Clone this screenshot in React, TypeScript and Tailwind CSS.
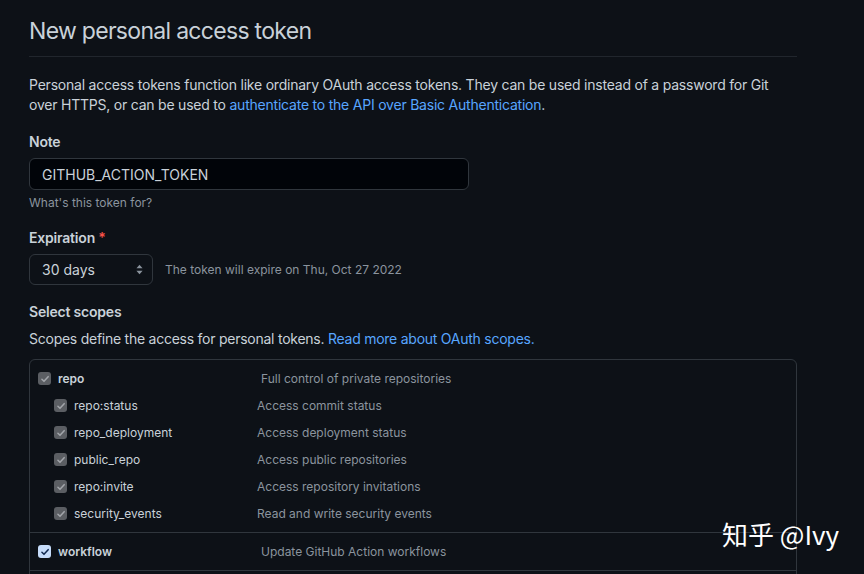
const SUB_SCOPES = [
  { name: "repo:status", desc: "Access commit status" },
  { name: "repo_deployment", desc: "Access deployment status" },
  { name: "public_repo", desc: "Access public repositories" },
  { name: "repo:invite", desc: "Access repository invitations" },
  { name: "security_events", desc: "Read and write security events" },
];

function Check({ active = false }: { active?: boolean }) {
  return (
    <span
      className={
        "flex h-[13px] w-[13px] shrink-0 items-center justify-center rounded-[3px] " +
        (active ? "bg-[#c6dcfa]" : "bg-[#5b5e63]")
      }
    >
      <svg viewBox="0 0 12 12" className="h-[10px] w-[10px]" fill="none">
        <path
          d="M2.3 6.3 L4.8 8.8 L9.8 3.2"
          stroke={active ? "#10284f" : "#a3a6ab"}
          strokeWidth="1.8"
          strokeLinecap="round"
          strokeLinejoin="round"
        />
      </svg>
    </span>
  );
}

function SelectArrows() {
  return (
    <svg viewBox="0 0 8 12" className="h-[11px] w-[7px]" fill="#8b949e">
      <path d="M4 0.5 L7.5 4.5 H0.5 Z" />
      <path d="M4 11.5 L7.5 7.5 H0.5 Z" />
    </svg>
  );
}

export default function App() {
  return (
    <div
      className="relative min-h-[574px] w-full overflow-hidden bg-[#0d1117] text-[#c9d1d9]"
      style={{ fontFamily: "Inter, 'Noto Sans', 'Liberation Sans', sans-serif" }}
    >
      <div className="ml-[29px] w-[768px]">
        {/* Header */}
        <div className="border-b border-[#21262d] pt-[16px] pb-[10px]">
          <h1 className="text-[23px] leading-[30px] font-normal tracking-[-0.7px]">
            New personal access token
          </h1>
        </div>

        <p className="mt-[18px] text-[14px] leading-[20px] tracking-[-0.22px]">
          Personal access tokens function like ordinary OAuth access tokens. They can be used instead of a password for Git
          <br />
          over HTTPS, or can be used to{" "}
          <span className="text-[#58a6ff]">authenticate to the API over Basic Authentication</span>.
        </p>

        {/* Note */}
        <div className="mt-[17px] text-[14px] leading-[20px] font-semibold tracking-[-0.2px]">Note</div>
        <div className="mt-[6px] flex h-[32px] w-[440px] items-center rounded-[6px] border border-[#30363d] bg-[#010409] px-[12px] text-[14px]">
          GITHUB_ACTION_TOKEN
        </div>
        <div className="mt-[4px] text-[12px] leading-[18px] text-[#8b949e]">What's this token for?</div>

        {/* Expiration */}
        <div className="mt-[16px] text-[14px] leading-[20px] font-semibold tracking-[-0.2px]">
          Expiration <span className="text-[#f85149]">*</span>
        </div>
        <div className="mt-[6px] flex items-center gap-[12px]">
          <div className="flex h-[31px] w-[124px] items-center justify-between rounded-[6px] border border-[#30363d] bg-[#0d1117] pr-[9px] pl-[12px] text-[14px]">
            <span>30 days</span>
            <SelectArrows />
          </div>
          <span className="text-[12px] text-[#8b949e]">The token will expire on Thu, Oct 27 2022</span>
        </div>

        {/* Scopes */}
        <div className="mt-[17px] text-[14px] leading-[20px] font-semibold tracking-[-0.2px]">Select scopes</div>
        <p className="mt-[7px] text-[14px] leading-[20px] tracking-[-0.25px]">
          Scopes define the access for personal tokens.{" "}
          <span className="text-[#58a6ff]">Read more about OAuth scopes.</span>
        </p>

        <div className="mt-[10px] rounded-[6px] border border-[#30363d]">
          <div className="border-b border-[#30363d] py-[5px]">
            <div className="flex h-[27px] items-center pl-[8px]">
              <Check />
              <span className="ml-[7px] w-[203px] text-[12px] font-semibold">repo</span>
              <span className="text-[12px] text-[#8b949e]">Full control of private repositories</span>
            </div>
            {SUB_SCOPES.map((s) => (
              <div key={s.name} className="flex h-[27px] items-center pl-[24px]">
                <Check />
                <span className="ml-[7px] w-[183px] text-[12px]">{s.name}</span>
                <span className="text-[12px] text-[#8b949e]">{s.desc}</span>
              </div>
            ))}
          </div>
          <div className="border-b border-[#30363d] py-[5px]">
            <div className="flex h-[27px] items-center pl-[8px]">
              <Check active />
              <span className="ml-[7px] w-[203px] text-[12px] font-semibold">workflow</span>
              <span className="text-[12px] text-[#8b949e]">Update GitHub Action workflows</span>
            </div>
          </div>
          <div className="h-[20px]" />
        </div>
      </div>

      {/* Watermark */}
      <div
        className="absolute top-[517px] left-[722px] text-[26px] leading-[34px] text-white"
        style={{ fontFamily: "'Noto Sans CJK SC', 'Noto Sans', sans-serif" }}
      >
        知乎 @Ivy
      </div>
    </div>
  );
}
